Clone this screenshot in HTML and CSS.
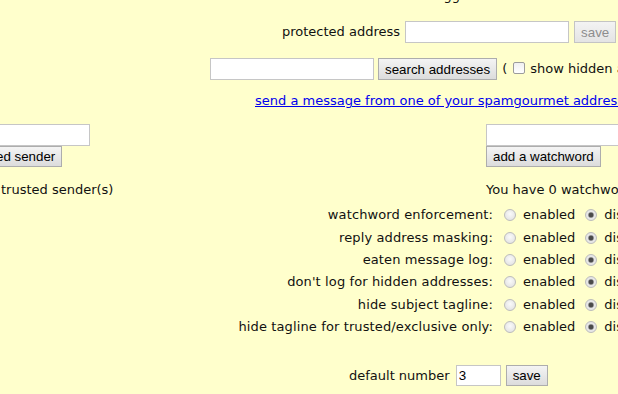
FILE: index.html
```html
<!DOCTYPE html>
<html lang="en">
<head>
    <meta charset="UTF-8">
    <title>spamgourmet - settings</title>
    <link rel="stylesheet" href="styles.css">
</head>
<body>
    <div class="page">
        <div class="top-line"><span class="top-text">logged in</span></div>

        <div class="row protect-row">
            <label for="protected-address">protected address</label>
            <input type="text" id="protected-address" class="field">
            <button class="btn" disabled>save</button>
        </div>

        <div class="row search-row">
            <input type="text" class="field">
            <button class="btn">search addresses</button>
            <span class="paren">(</span>
            <input type="checkbox" class="check" id="show-hidden">
            <label for="show-hidden">show hidden addresses)</label>
        </div>

        <div class="row link-row">
            <a href="#">send a message from one of your spamgourmet addresses</a>
        </div>

        <div class="lists">
            <div class="list-col">
                <input type="text" class="field">
                <button class="btn">add a trusted sender</button>
                <p class="count">You have 0 trusted sender(s)</p>
            </div>
            <div class="list-col">
                <input type="text" class="field">
                <button class="btn">add a watchword</button>
                <p class="count">You have 0 watchwords</p>
            </div>
        </div>

        <div class="settings">
            <div class="setting-label">watchword enforcement:</div>
            <div class="setting-options">
                <input type="radio" class="radio" name="ww"><span>enabled</span>
                <input type="radio" class="radio second" name="ww" checked><span>disabled</span>
            </div>

            <div class="setting-label">reply address masking:</div>
            <div class="setting-options">
                <input type="radio" class="radio" name="mask"><span>enabled</span>
                <input type="radio" class="radio second" name="mask" checked><span>disabled</span>
            </div>

            <div class="setting-label">eaten message log:</div>
            <div class="setting-options">
                <input type="radio" class="radio" name="log"><span>enabled</span>
                <input type="radio" class="radio second" name="log" checked><span>disabled</span>
            </div>

            <div class="setting-label">don't log for hidden addresses:</div>
            <div class="setting-options">
                <input type="radio" class="radio" name="hidelog"><span>enabled</span>
                <input type="radio" class="radio second" name="hidelog" checked><span>disabled</span>
            </div>

            <div class="setting-label">hide subject tagline:</div>
            <div class="setting-options">
                <input type="radio" class="radio" name="tagline"><span>enabled</span>
                <input type="radio" class="radio second" name="tagline" checked><span>disabled</span>
            </div>

            <div class="setting-label">hide tagline for trusted/exclusive only:</div>
            <div class="setting-options">
                <input type="radio" class="radio" name="trustedtag"><span>enabled</span>
                <input type="radio" class="radio second" name="trustedtag" checked><span>disabled</span>
            </div>
        </div>

        <div class="row default-row">
            <label for="default-number">default number</label>
            <input type="text" id="default-number" class="field number-field" value="3">
            <button class="btn">save</button>
        </div>
    </div>
</body>
</html>
```

FILE: styles.css
```css
html, body {
    margin: 0;
    overflow: hidden;
    background: #ffffcc;
}

.page {
    width: 618px;
    height: 394px;
    overflow: hidden;
    font-family: "DejaVu Sans", Verdana, sans-serif;
    font-size: 13px;
    line-height: 16px;
    color: #111;
}

.top-line {
    height: 4px;
    overflow: hidden;
}

.top-text {
    display: block;
    margin-top: -12px;
    padding-left: 432px;
    white-space: nowrap;
}

.row {
    display: flex;
    align-items: center;
    white-space: nowrap;
}

.row > * {
    flex: none;
}

.field {
    box-sizing: border-box;
    width: 164px;
    height: 22px;
    padding: 1px 3px;
    border: 1px solid #c6c6c6;
    background: #fff;
    font-family: "Liberation Sans", Arial, sans-serif;
    font-size: 13.33px;
    color: #000;
    outline: none;
}

.btn {
    box-sizing: border-box;
    height: 22px;
    padding: 0 6px;
    border: 1px solid #adadad;
    border-radius: 0;
    background: linear-gradient(#f4f4f4, #dcdcdc);
    font-family: "Liberation Sans", Arial, sans-serif;
    font-size: 13.33px;
    color: #000;
    cursor: pointer;
}

.btn:disabled {
    color: #8d8d8d;
    border-color: #c4c4c4;
    background: linear-gradient(#f3f3f3, #e4e4e4);
    cursor: default;
}

.protect-row {
    margin-top: 17px;
    padding-left: 282px;
    gap: 5px;
}

.search-row {
    margin-top: 15px;
    padding-left: 210px;
}

.search-row .btn {
    margin-left: 4px;
}

.paren {
    margin-left: 5px;
}

.check {
    appearance: none;
    box-sizing: border-box;
    width: 12px;
    height: 12px;
    margin: -3px 5px 0 6px;
    border: 1px solid #9c9c9c;
    border-radius: 2px;
    background: linear-gradient(#f0f0f0, #fff);
}

.link-row {
    margin-top: 13px;
    padding-left: 255px;
}

.link-row a {
    color: #0000ee;
    text-decoration: underline;
}

.lists {
    display: grid;
    grid-template-columns: 560px 220px;
    margin-top: 15px;
    margin-left: -74px;
    white-space: nowrap;
}

.list-col .field,
.list-col .btn {
    display: block;
}

.list-col .btn {
    height: 21px;
}

.count {
    margin: 15px 0 0 0;
}

.settings {
    display: grid;
    grid-template-columns: 497px max-content;
    grid-auto-rows: 22.4px;
    align-items: center;
    margin-top: 6px;
    white-space: nowrap;
}

.setting-label {
    text-align: right;
    padding-right: 4px;
    letter-spacing: 0.12px;
}

.setting-options {
    display: flex;
    align-items: center;
}

.radio {
    appearance: none;
    box-sizing: border-box;
    width: 12px;
    height: 12px;
    margin: 0 7px;
    border: 1px solid #bcbcbc;
    border-radius: 50%;
    background: radial-gradient(circle at 50% 40%, #fafafa, #dedede);
}

.radio.second {
    margin-left: 10px;
}

.radio:checked {
    background: radial-gradient(circle, #4a4a4a 0 2px, #9a9a9a 2.6px, #e6e6e6 3.4px);
}

.default-row {
    margin-top: 27px;
    padding-left: 349px;
}

.default-row .field {
    margin-left: 6px;
}

.number-field {
    width: 45px;
    height: 21px;
    padding: 0 2px;
}

.default-row .btn {
    margin-left: 5px;
    height: 21px;
}
```
